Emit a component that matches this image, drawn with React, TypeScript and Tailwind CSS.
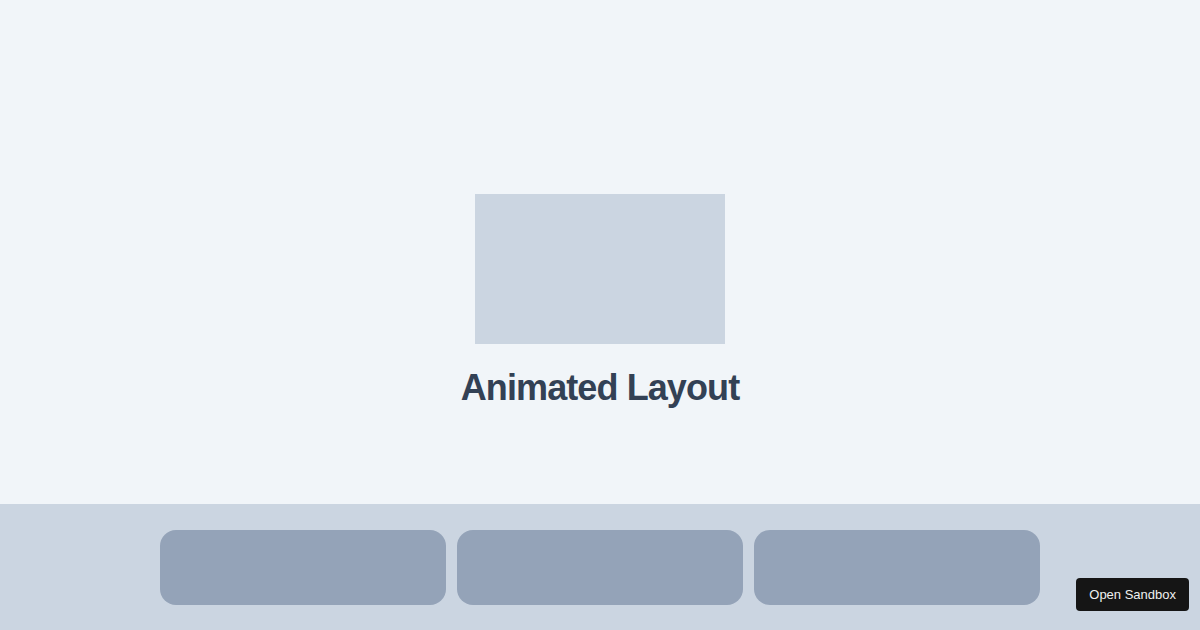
export default function App() {
  return (
    <div
      className="relative flex h-[630px] w-full flex-col overflow-hidden bg-[#f1f5f9]"
      style={{ fontFamily: '"Liberation Sans", Arial, sans-serif' }}
    >
      <main className="flex h-[504px] flex-col items-center pt-[194px]">
        <div className="h-[150px] w-[250px] bg-[#cbd5e1]" />
        <h1 className="mt-6 text-4xl font-bold leading-10 tracking-tight text-[#334155]">
          Animated Layout
        </h1>
      </main>
      <footer className="flex h-[126px] items-start justify-center gap-[11px] bg-[#cbd5e1] pt-[26px]">
        <div className="h-[75px] w-[286px] rounded-2xl bg-[#94a3b8]" />
        <div className="h-[75px] w-[286px] rounded-2xl bg-[#94a3b8]" />
        <div className="h-[75px] w-[286px] rounded-2xl bg-[#94a3b8]" />
      </footer>
      <button className="absolute bottom-[19px] right-[11px] h-[33px] rounded-[4px] bg-[#151515] px-[13px] text-[13px] text-[#f0f0f0]">
        Open Sandbox
      </button>
    </div>
  );
}
